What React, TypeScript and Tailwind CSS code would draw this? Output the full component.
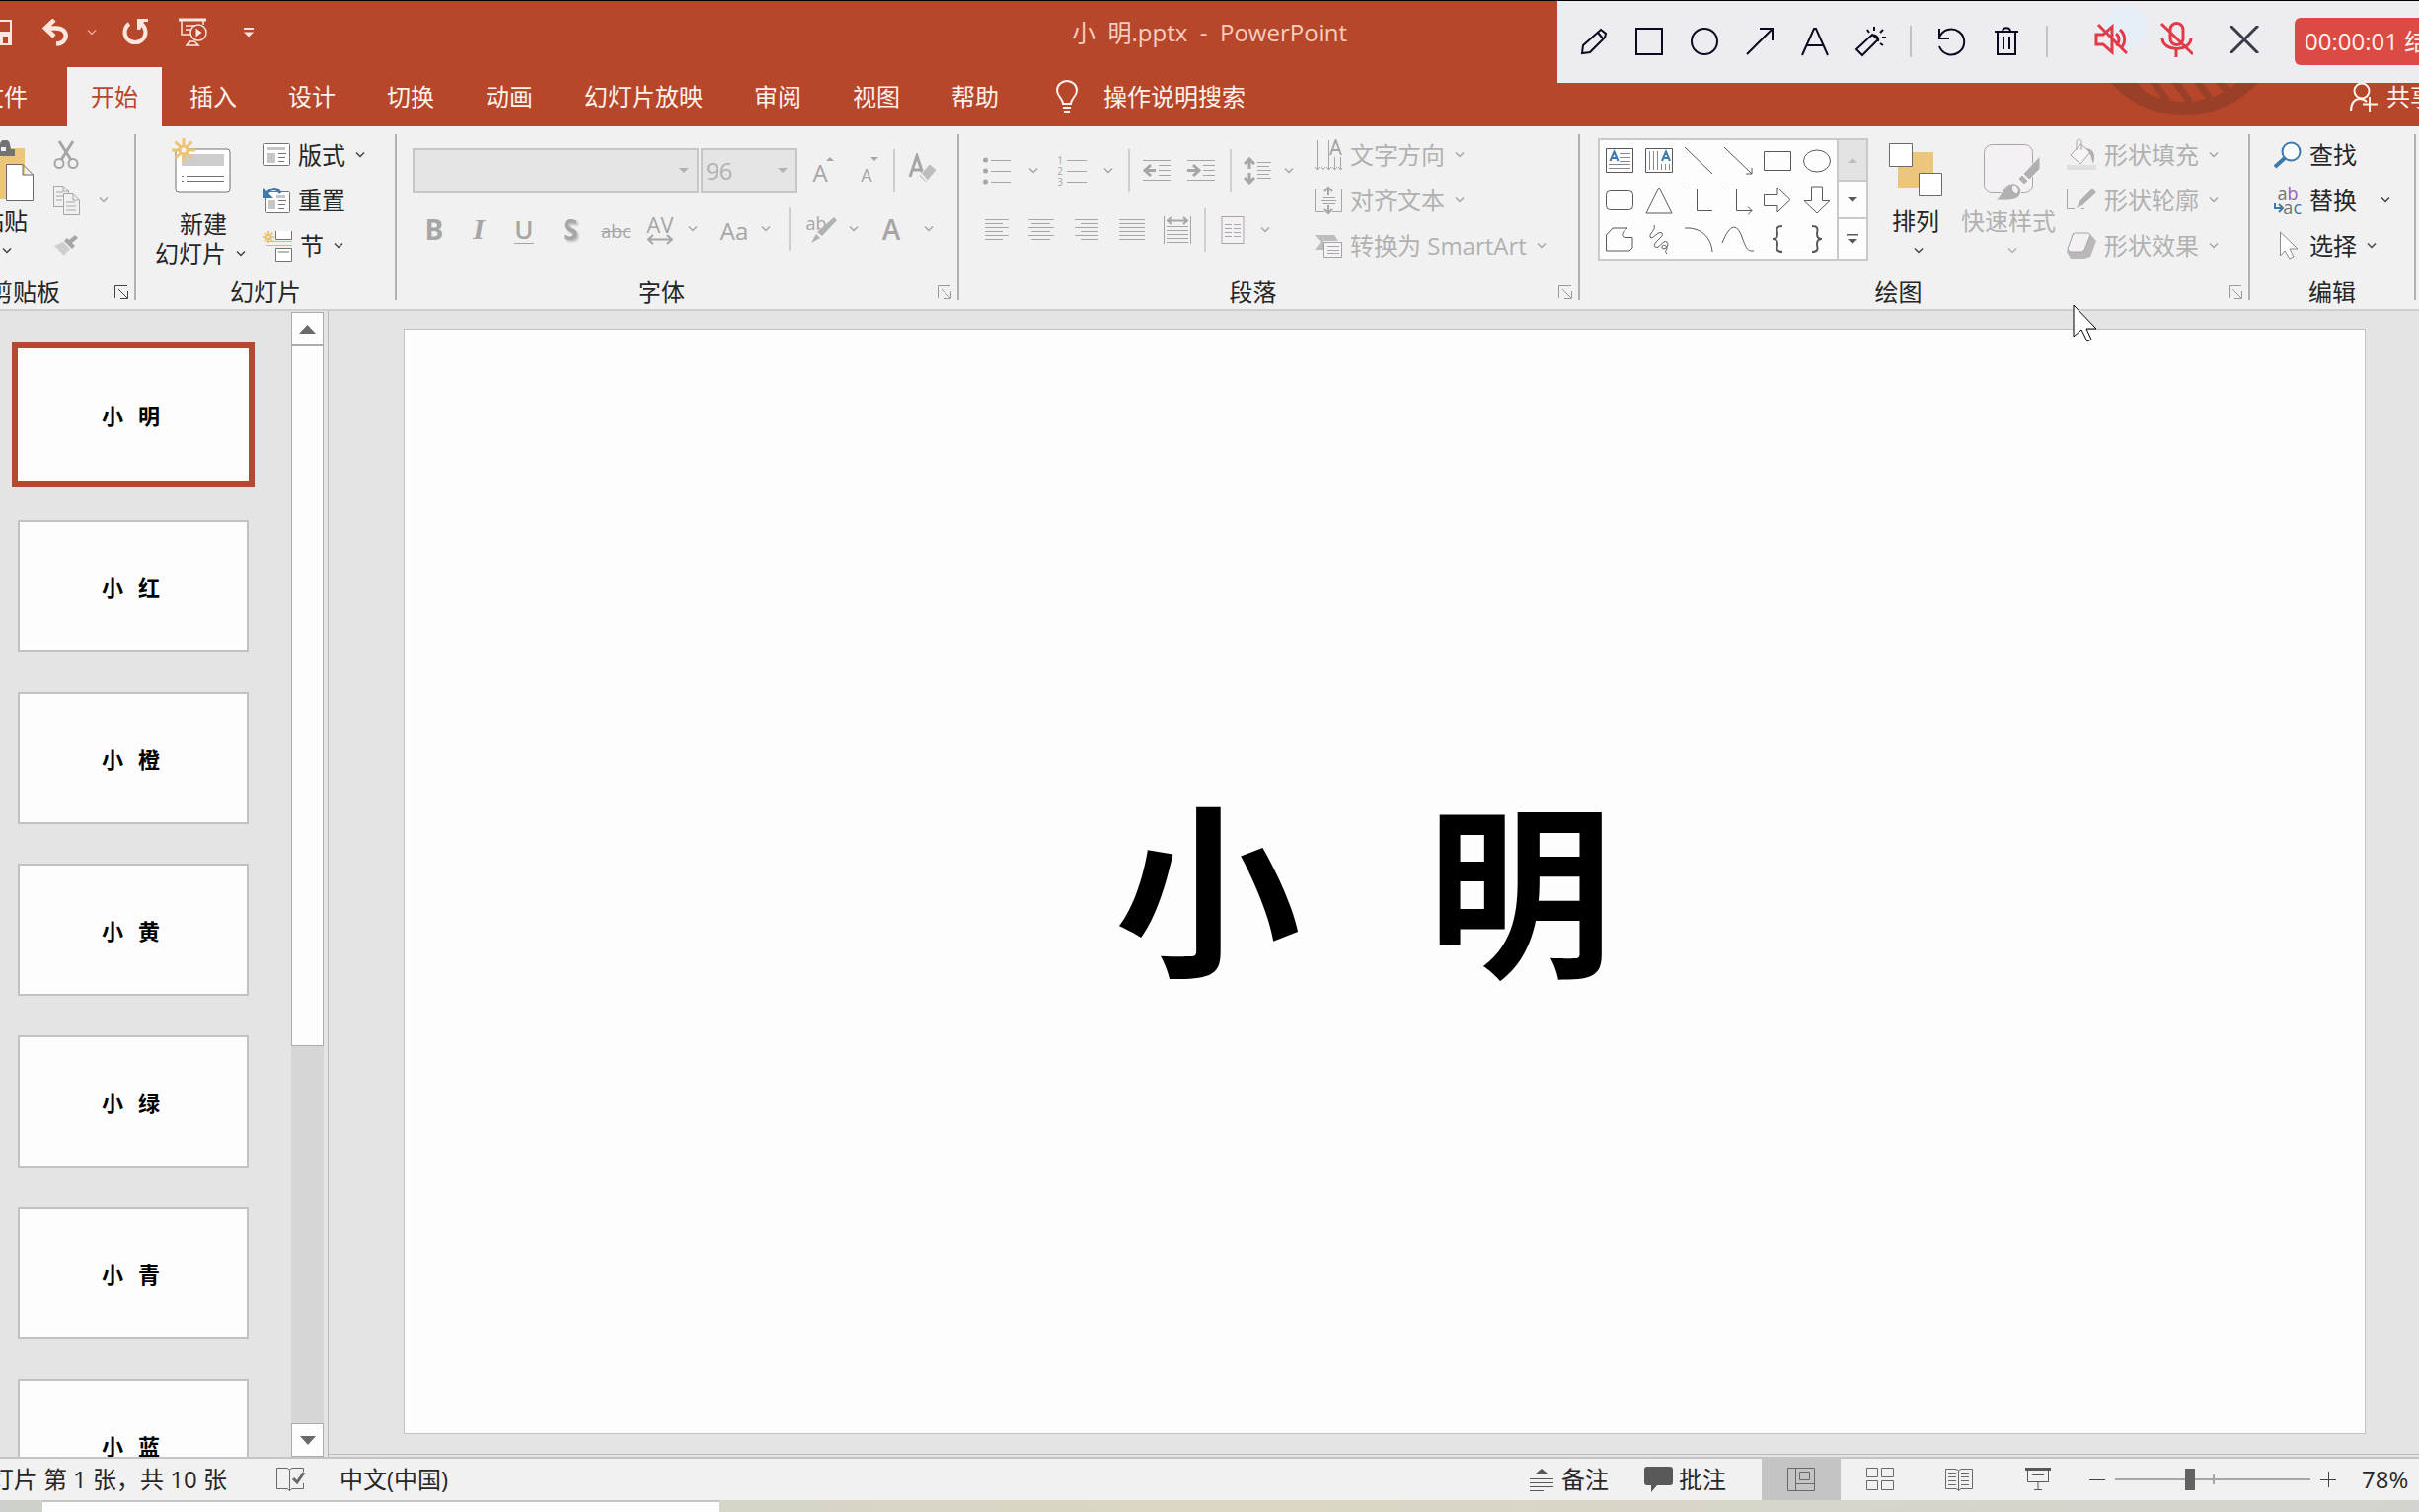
import type { ReactNode } from "react";

const slides = ["小   明 ", "小   红 ", "小   橙 ", "小   黄 ", "小   绿 ", "小   青 ", "小   蓝 "];
const tabs = ["开始", "插入", "设计", "切换", "动画", "幻灯片放映", "审阅", "视图", "帮助"];

const GRAY = "#a6a6a6";
const DARK = "#595959";

interface IconProps {
    w: number;
    h: number;
    color?: string;
    stroke?: number;
    children: ReactNode;
}

const Icon = ({ w, h, color = GRAY, stroke = 2, children }: IconProps) => (
    <svg width={w} height={h} viewBox={`0 0 ${w} ${h}`} fill="none" stroke={color} strokeWidth={stroke} className="shrink-0" aria-hidden="true">
        {children}
    </svg>
);

const Chevron = ({ color = "#444444" }: { color?: string }) => (
    <Icon w={14} h={8} color={color} stroke={1.5}>
        <path d="M3 1.5l4 4 4-4" />
    </Icon>
);

const Lines = ({ rows }: { rows: number[][] }) => (
    <path d={rows.map(([x1, x2, y]) => `M${x1} ${y}H${x2}`).join("")} />
);

const Divider = () => <div className="mt-2 h-[168px] w-0.5 shrink-0 bg-[#b1b1b1]" />;

const SmallDivider = () => <div className="h-11 w-0.5 bg-[#cfcfcf]" />;

interface GroupProps {
    label: string;
    className: string;
    launcher?: string;
    children: ReactNode;
}

const Group = ({ label, className, launcher, children }: GroupProps) => (
    <section aria-label={label} className={`flex shrink-0 flex-col ${className}`}>
        <div className="flex h-36 items-start pt-1.5">{children}</div>
        <div className="flex h-[41px] items-center pt-1.5">
            <span className="flex-1 text-center text-[#262626]">{label}</span>
            {launcher && (
                <button type="button" aria-label={`${label}设置`} className="flex w-8 pl-3">
                    <Icon w={14} h={14} color={launcher} stroke={1}>
                        <path d="M.5 13V.5H13M4 4l9 9M13.5 6v7.5H6" />
                    </Icon>
                </button>
            )}
        </div>
    </section>
);

interface MenuRowProps {
    icon: ReactNode;
    label: string;
    muted?: boolean;
    chevron?: string;
}

const MenuRow = ({ icon, label, muted, chevron }: MenuRowProps) => (
    <button type="button" className={`flex h-[46px] items-center gap-2 whitespace-nowrap ${muted ? "text-[#b1b1b1]" : "text-[#262626]"}`}>
        {icon}
        {label}
        {chevron !== undefined && (
            <span className={chevron}>
                <Chevron color={muted ? GRAY : "#444444"} />
            </span>
        )}
    </button>
);

const Tool = ({ label, className, children }: { label: string; className: string; children: ReactNode }) => (
    <button type="button" aria-label={label} className={`flex h-[46px] shrink-0 items-center justify-center text-[#a6a6a6] ${className}`}>
        {children}
    </button>
);

const Sparkle = ({ cx, cy, r }: { cx: number; cy: number; r: number }) => (
    <g stroke="#ecc474" strokeWidth={r > 8 ? 3 : 2}>
        {[0, 45, 90, 135].map((a) => (
            <path key={a} d={`M${cx - r} ${cy}H${cx + r}`} transform={`rotate(${a} ${cx} ${cy})`} />
        ))}
        <circle cx={cx} cy={cy} r={r / 3} fill="#f1f1f1" />
    </g>
);

const QuickAccess = () => (
    <div className="flex flex-1 items-center">
        <button type="button" aria-label="保存" className="w-7">
            <Icon w={13} h={26} color="#fde6de">
                <path d="M0 1H11V25H0" />
                <path d="M0 12H12V26H8V17H3V26H0z" fill="#fde6de" stroke="none" />
            </Icon>
        </button>
        <button type="button" aria-label="撤消" className="flex w-14 justify-center">
            <Icon w={28} h={28} color="#fde6de" stroke={4.5}>
                <path d="M13 1L4 9.500l9 8.500M4 9.500H15C28 9.500 28 25 15 25.500" />
            </Icon>
        </button>
        <button type="button" aria-label="撤消选项" className="ml-0.5 w-4">
            <Chevron color="#e9a893" />
        </button>
        <button type="button" aria-label="重复" className="flex w-[70px] justify-center">
            <Icon w={28} h={28} color="#fde6de" stroke={4}>
                <path d="M8 5a10.500 10.500 0 1 0 12 0" />
                <path d="M16 0H27V3H23L19 11H16z" fill="#fde6de" stroke="none" />
            </Icon>
        </button>
        <button type="button" aria-label="从头开始" className="flex w-[46px] justify-center">
            <Icon w={29} h={30} color="#fde6de" stroke={2}>
                <path d="M0 2H28" strokeWidth={3} />
                <path d="M3 3V17H12M7 8H17M7 12H12M11 23v3M8 28l3-4h5l4 4zM25 3v4" strokeWidth={1.5} />
                <circle cx="20" cy="15" r="8" strokeWidth={1.5} />
                <path d="M17.500 10.500v9l6-4.500z" fill="#fde6de" stroke="none" />
            </Icon>
        </button>
        <button type="button" aria-label="自定义快速访问工具栏" className="flex w-[68px] justify-center">
            <Icon w={10} h={10} color="#fde6de">
                <path d="M0 1H10" />
                <path d="M0 4.500H10L5 9.500z" fill="#fde6de" stroke="none" />
            </Icon>
        </button>
    </div>
);

const TabBar = () => (
    <nav className="flex h-[60px] items-stretch gap-1 overflow-hidden whitespace-nowrap text-[#fff1ec]">
        <button type="button" className="-ml-5 w-[84px] shrink-0 text-left">文件</button>
        {tabs.map((tab) => (
            <button key={tab} type="button" className={`shrink-0 px-6 ${tab === "开始" ? "bg-[#f1f1f1] text-[#b7472a]" : ""}`}>
                {tab}
            </button>
        ))}
        <button type="button" className="ml-6 flex items-center gap-6 pl-1">
            <Icon w={26} h={34} color="#fff1ec">
                <path d="M9 24C9 18 3 17 3 10.500A10 9.500 0 0 1 23 10.500C23 17 17 18 17 24zM9 28h8M10 32h6" />
            </Icon>
            操作说明搜索
        </button>
        <button type="button" className="ml-auto flex w-[70px] items-center gap-2 overflow-hidden">
            <Icon w={29} h={31} color="#fff1ec">
                <circle cx="12" cy="9" r="7.500" />
                <path d="M1 29c0-8 4-12 9-12 3 0 5 1 7 3M20 15v15M13 22.500h15" />
            </Icon>
            共享
        </button>
    </nav>
);

const Recorder = () => (
    <div role="toolbar" aria-label="录制" className="absolute top-px right-0 flex h-[83px] w-[873px] items-start overflow-hidden bg-[#edecf1] pt-[13px] pl-[9px]">
        <div className="absolute top-1 left-[554px] size-[44px] rounded-full bg-[#e6eff8]" />
        {[
            { label: "画笔", d: "M2 26l1-8L21 2l5 4-1 4L10 25zM18 5l5 6" },
            { label: "矩形", d: "M1 1H27V27H1z" },
            { label: "椭圆", d: "M14 1a13 13 0 1 1 0 26a13 13 0 1 1 0-26z" },
            { label: "箭头", d: "M1 27L27 1M14 1H27V13" },
            { label: "文字", d: "M1 28L13 1h2L27 28M5 18H23" },
            { label: "荧光笔", d: "M6 28L0 22 16 7l6 5zM14 9c3-3 9-1 8 5M18-1v4M11 2l2 3M27 2l-3 3M26 10h4M24 16l3 2" },
        ].map((tool) => (
            <button key={tool.label} type="button" aria-label={tool.label} className="relative flex h-14 w-14 shrink-0 items-center justify-center">
                <svg width="28" height="28" viewBox="0 0 28 28" fill="none" stroke="#0b0b20" strokeWidth="2" className="overflow-visible">
                    <path d={tool.d} />
                </svg>
            </button>
        ))}
        <div className="mx-3 mt-3 h-8 w-0.5 shrink-0 bg-[#c2c2c6]" />
        <button type="button" aria-label="撤销" className="flex h-14 w-14 shrink-0 items-center justify-center">
            <Icon w={30} h={30} color="#0b0b20">
                <path d="M3 2V12H13M3 11A13 13 0 1 1 3 20" />
            </Icon>
        </button>
        <button type="button" aria-label="清空" className="flex h-14 w-14 shrink-0 items-center justify-center">
            <Icon w={26} h={30} color="#0b0b20">
                <path d="M1 5H25M4 5V28H22V5M10 10V23M16 10V23M9 5c0-5 8-5 8 0" />
            </Icon>
        </button>
        <div className="mt-3 ml-3 h-8 w-0.5 shrink-0 bg-[#c2c2c6]" />
        <button type="button" aria-label="扬声器静音" className="relative ml-8 flex h-[52px] w-16 shrink-0 items-center justify-center">
            <Icon w={34} h={34} color="#e23b47" stroke={3}>
                <path d="M2 12H9L18 4V30L9 22H2zM22 11c4 3 4 9 0 12M26 7c6 5 6 14 1 19M4 2L33 31" />
            </Icon>
        </button>
        <button type="button" aria-label="麦克风静音" className="flex h-[52px] w-[68px] shrink-0 items-center justify-center">
            <Icon w={34} h={36} color="#e23b47" stroke={3}>
                <path d="M11 8a6 6 0 0 1 13 0V17a6.500 6.500 0 0 1-13 0zM3 17c1 14 28 14 29 0M17 28v8M2 2L34 33" />
            </Icon>
        </button>
        <button type="button" aria-label="关闭" className="flex h-[52px] w-[70px] shrink-0 items-center justify-center">
            <Icon w={30} h={28} color="#3a3d48" stroke={3}>
                <path d="M1 0L29 28M29 0L1 28" />
            </Icon>
        </button>
        <button type="button" className="mt-1 ml-4 h-12 w-40 shrink-0 rounded-md bg-[#dc4a44] pl-2.5 text-left whitespace-nowrap text-[#fff0ee]">
            00:00:01 结束
        </button>
    </div>
);

const ClipboardGroup = () => (
    <Group label="剪贴板" launcher="#444444" className="-ml-[54px] w-[190px]">
        <button type="button" className="ml-4 flex w-[84px] flex-col items-center text-[#262626]">
            <span className="flex h-[78px] pt-2 pl-2">
                <Icon w={56} h={64} color="#6a6a6a" stroke={1}>
                    <path d="M3 8H45V60H3z" fill="#ecc67c" stroke="none" />
                    <path d="M12 4h8a4 4 0 0 1 10-1l1 5h4v7H12z" fill="#737373" stroke="none" transform="translate(0 1)" />
                    <path d="M21 7h5v4h-5z" fill="#f1f1f1" stroke="none" />
                    <path d="M26.500 24.500H43L53.500 35V61.500H26.500zM43 24.500V35H53.500" fill="#ffffff" />
                </Icon>
            </span>
            <span className="leading-6">粘贴</span>
            <span className="flex h-9 items-center pl-1.5">
                <Chevron />
            </span>
        </button>
        <div className="flex w-[42px] flex-col">
            <Tool label="剪切" className="w-[42px]">
                <Icon w={26} h={30}>
                    <path d="M6 1L18 20M20 1L8 20" strokeWidth={3} />
                    <circle cx="6" cy="23.500" r="4.500" />
                    <circle cx="20" cy="23.500" r="4.500" />
                </Icon>
            </Tool>
            <Tool label="复制" className="w-[42px]">
                <Icon w={28} h={32} stroke={1}>
                    <path d="M1.500 1.500H11L16.500 7V22.500H1.500zM11 1.500V7h6M4 8h7M4 12h10M4 16h6" />
                    <path d="M11.500 9.500H21L27.500 16V30.500H11.500zM21 9.500V16h6M14 18h9M14 22h10M14 26h10" fill="#f1f1f1" />
                </Icon>
            </Tool>
            <Tool label="格式刷" className="w-[42px]">
                <Icon w={26} h={24}>
                    <path d="M1 12L10 8 17 15 11 22z" fill="#cfcfcf" stroke="none" />
                    <path d="M11 7l8 8 3-3-3-3 6-5-3-3-6 5-2-2z" fill={GRAY} stroke="none" />
                </Icon>
            </Tool>
        </div>
        <Tool label="复制选项" className="mt-[46px] w-[34px]">
            <Chevron color={GRAY} />
        </Tool>
    </Group>
);

const SlidesGroup = () => (
    <Group label="幻灯片" className="w-[262px]">
        <button type="button" className="ml-3 flex w-[108px] flex-col items-center text-[#262626]">
            <span className="flex h-[78px] pt-1">
                <Icon w={60} h={60} color="#737373" stroke={1}>
                    <rect x="4" y="13" width="55" height="44" rx="3" fill="#ffffff" />
                    <path d="M10 18H53V30H10z" fill="#cdcdcd" stroke="none" />
                    <path d="M10 40.500h2M15 40.500H53M10 45.500h2M15 45.500H53" />
                    <Sparkle cx={12} cy={14} r={12} />
                </Icon>
            </span>
            <span className="pl-1 leading-[30px]">新建</span>
            <span className="flex items-center gap-2 leading-[30px]">
                幻灯片
                <Chevron />
            </span>
        </button>
        <div className="ml-2 flex flex-col">
            <MenuRow
                label="版式"
                chevron=""
                icon={
                    <Icon w={28} h={24} color="#737373" stroke={1}>
                        <rect x=".5" y=".5" width="27" height="22" rx="1" fill="#ffffff" />
                        <path d="M5 4h18v3H5zM5 10h8v10H5z" fill="#c6c6c6" stroke="none" />
                        <path d="M16 10.500h8M16 14.500h7M16 18.500h6" />
                    </Icon>
                }
            />
            <MenuRow
                label="重置"
                icon={
                    <Icon w={28} h={28} color="#737373" stroke={1}>
                        <rect x="3.500" y="5.500" width="24" height="21" rx="1" fill="#ffffff" />
                        <path d="M14 9h9v3h-9zM6 14h7v9H6z" fill="#c6c6c6" stroke="none" />
                        <path d="M16 14.500h8M16 18.500h7M16 22.500h6" />
                        <path d="M4 8C8 1 15 1 18 7" stroke="#3f78ab" strokeWidth={3} />
                        <path d="M0 1v11h11z" fill="#3f78ab" stroke="none" />
                    </Icon>
                }
            />
            <MenuRow
                label="节"
                chevron=""
                icon={
                    <Icon w={30} h={32} color="#737373" stroke={1}>
                        <path d="M13.500 1V9.500H29.500V1" fill="#ffffff" />
                        <path d="M4 11.500H30M4 15.500H30" stroke="#e5b85f" />
                        <path d="M13.500 18.500H29.500V31.500H13.500zM16 22H27" fill="#ffffff" />
                        <Sparkle cx={6} cy={7} r={6} />
                    </Icon>
                }
            />
        </div>
    </Group>
);

const FontGroup = () => (
    <Group label="字体" launcher="#9a9a9a" className="w-[568px]">
        <div className="flex flex-col gap-[13px] pt-4 pl-4">
            <div className="flex items-center">
                <div className="relative flex">
                    <select aria-label="字体" disabled className="h-[46px] w-[290px] appearance-none border-2 border-[#c6c6c6] bg-[#e5e5e5]">
                        <option></option>
                    </select>
                    <svg width="10" height="6" className="absolute top-5 right-2.5"><path d="M0 0H10L5 5z" fill="#b1b1b1" /></svg>
                </div>
                <div className="relative ml-0.5 flex">
                    <select aria-label="字号" disabled className="h-[46px] w-[98px] appearance-none border-2 border-[#c6c6c6] bg-[#e5e5e5] pl-[3px] text-[#b1b1b1] opacity-100">
                        <option>96</option>
                    </select>
                    <svg width="10" height="6" className="absolute top-5 right-2.5"><path d="M0 0H10L5 5z" fill="#b1b1b1" /></svg>
                </div>
                <Tool label="增大字号" className="w-12 pl-1">
                    <span className="pt-1 text-[24px] font-medium">A</span>
                    <svg width="8" height="4" className="mb-6 -ml-0.5"><path d="M0 4H8L4 0z" fill={GRAY} /></svg>
                </Tool>
                <Tool label="减小字号" className="w-[46px] pl-1">
                    <span className="pt-2 text-[18px] font-medium">A</span>
                    <svg width="8" height="4" className="mb-6 -ml-0.5"><path d="M0 0H8L4 4z" fill={GRAY} /></svg>
                </Tool>
                <div className="flex w-2 justify-center"><SmallDivider /></div>
                <Tool label="清除所有格式" className="w-[50px]">
                    <Icon w={30} h={36}>
                        <path d="M2 24L9 3l7 21M5 17h9" strokeWidth={3} />
                        <path d="M22 11l7 6-11 13-7-7z" fill="#bdbdbd" stroke="#f1f1f1" strokeWidth={1} />
                        <path d="M13 21l6 7" stroke="#f1f1f1" />
                    </Icon>
                </Tool>
            </div>
            <div className="flex items-center">
                <Tool label="加粗" className="w-11"><b className="text-[28px]">B</b></Tool>
                <Tool label="倾斜" className="w-[46px]"><i className="font-['Liberation_Serif',serif] text-[30px] font-bold">I</i></Tool>
                <Tool label="下划线" className="w-[46px]"><span className="border-b border-[#a6a6a6] text-[26px] leading-7 font-semibold">U</span></Tool>
                <Tool label="文字阴影" className="w-12"><b className="text-[28px] [text-shadow:2px_2px_2px_#bdbdbd]">S</b></Tool>
                <Tool label="删除线" className="w-11"><s className="pt-1 text-[18px]">abc</s></Tool>
                <Tool label="字符间距" className="w-[46px]">
                    <span className="flex flex-col items-center">
                        <span className="text-[22px] leading-5">AV</span>
                        <Icon w={28} h={11}><path d="M2 5.500H26M7 1L2 5.500 7 10M21 1l5 4.500-5 4.500" /></Icon>
                    </span>
                </Tool>
                <Tool label="字符间距选项" className="w-5"><Chevron color={GRAY} /></Tool>
                <Tool label="更改大小写" className="ml-3 w-10"><span className="pt-1 text-[24px] font-medium">Aa</span></Tool>
                <Tool label="大小写选项" className="w-6"><Chevron color={GRAY} /></Tool>
                <div className="flex w-6 justify-center"><SmallDivider /></div>
                <Tool label="突出显示" className="w-[30px]">
                    <span className="relative pb-3 text-[18px] leading-5">
                        ab
                        <svg width="28" height="28" className="absolute top-1 left-1"><path d="M25 0l3 3L13 19l-5-4zM7 17l4 4-9 5z" fill="#b1b1b1" /></svg>
                    </span>
                </Tool>
                <Tool label="突出显示选项" className="w-[46px]"><Chevron color={GRAY} /></Tool>
                <Tool label="字体颜色" className="w-[30px]"><span className="text-[28px] font-semibold">A</span></Tool>
                <Tool label="字体颜色选项" className="w-[46px]"><Chevron color={GRAY} /></Tool>
            </div>
        </div>
    </Group>
);

const ParagraphGroup = () => (
    <Group label="段落" launcher="#9a9a9a" className="w-[627px]">
        <div className="flex w-[360px] shrink-0 flex-col gap-[14px] pt-4 pl-4">
            <div className="flex items-center">
                <Tool label="项目符号" className="w-11">
                    <Icon w={28} h={28} stroke={1}>
                        <g fill={GRAY} stroke="none"><circle cx="2.500" cy="3" r="2.500" /><circle cx="2.500" cy="14" r="2.500" /><circle cx="2.500" cy="25" r="2.500" /></g>
                        <Lines rows={[[8, 28, 3.5], [8, 28, 14.5], [8, 28, 25.5]]} />
                    </Icon>
                </Tool>
                <Tool label="项目符号选项" className="w-[30px]"><Chevron color={GRAY} /></Tool>
                <Tool label="编号" className="w-12">
                    <span className="flex flex-col pr-1 text-[10px] leading-[11px]"><span>1</span><span>2</span><span>3</span></span>
                    <Icon w={20} h={28} stroke={1}><Lines rows={[[0, 20, 3.5], [0, 20, 14.5], [0, 20, 25.5]]} /></Icon>
                </Tool>
                <Tool label="编号选项" className="w-[26px]"><Chevron color={GRAY} /></Tool>
                <div className="flex w-4 justify-center"><SmallDivider /></div>
                <Tool label="降低列表级别" className="w-10">
                    <Icon w={28} h={22} stroke={1}>
                        <Lines rows={[[0, 28, .5], [16, 28, 5.5], [16, 28, 10.5], [16, 28, 15.5], [0, 28, 20.5]]} />
                        <path d="M13 10.500H3M8 5l-6 5.500L8 16" strokeWidth={3} />
                    </Icon>
                </Tool>
                <Tool label="提高列表级别" className="w-[50px]">
                    <Icon w={28} h={22} stroke={1}>
                        <Lines rows={[[0, 28, .5], [16, 28, 5.5], [16, 28, 10.5], [16, 28, 15.5], [0, 28, 20.5]]} />
                        <path d="M0 10.500H11M6 5l6 5.500L6 16" strokeWidth={3} />
                    </Icon>
                </Tool>
                <div className="flex w-2.5 justify-center"><SmallDivider /></div>
                <Tool label="行距" className="w-11">
                    <Icon w={28} h={28} stroke={1}>
                        <Lines rows={[[14, 28, 5.5], [14, 26, 9.5], [14, 28, 13.5], [14, 26, 17.5], [14, 28, 21.5]]} />
                        <path d="M6 12V2M1 7l5-5 5 5M6 16V26M1 21l5 5 5-5" strokeWidth={3} />
                    </Icon>
                </Tool>
                <Tool label="行距选项" className="w-5"><Chevron color={GRAY} /></Tool>
            </div>
            <div className="flex items-center">
                <Tool label="左对齐" className="w-11">
                    <Icon w={24} h={22} stroke={1}><Lines rows={[[0, 24, .5], [0, 18, 4.5], [0, 24, 8.5], [0, 18, 12.5], [0, 24, 16.5], [0, 18, 20.5]]} /></Icon>
                </Tool>
                <Tool label="居中" className="w-[46px]">
                    <Icon w={26} h={22} stroke={1}><Lines rows={[[0, 26, .5], [3, 22, 4.5], [0, 26, 8.5], [3, 22, 12.5], [0, 26, 16.5], [3, 22, 20.5]]} /></Icon>
                </Tool>
                <Tool label="右对齐" className="w-[46px]">
                    <Icon w={24} h={22} stroke={1}><Lines rows={[[0, 24, .5], [6, 24, 4.5], [0, 24, 8.5], [6, 24, 12.5], [0, 24, 16.5], [6, 24, 20.5]]} /></Icon>
                </Tool>
                <Tool label="两端对齐" className="w-[46px]">
                    <Icon w={26} h={22} stroke={1}><Lines rows={[[0, 26, .5], [0, 26, 4.5], [0, 26, 8.5], [0, 26, 12.5], [0, 26, 16.5], [0, 26, 20.5]]} /></Icon>
                </Tool>
                <Tool label="分散对齐" className="w-[46px]">
                    <Icon w={28} h={28} stroke={1}>
                        <path d="M.5 0V28M27.500 0V28" />
                        <Lines rows={[[3, 25, 10.5], [3, 25, 14.5], [3, 25, 18.5], [3, 25, 22.5], [3, 25, 26.5]]} />
                        <path d="M4 4.500H24M8 1L4 4.500 8 8M20 1l4 3.500L20 8" strokeWidth={2} />
                    </Icon>
                </Tool>
                <div className="flex w-2.5 justify-center"><SmallDivider /></div>
                <Tool label="分栏" className="w-[46px]">
                    <Icon w={24} h={28} stroke={1}>
                        <rect x="1" y=".5" width="22" height="27" fill="#f5f0f3" />
                        <Lines rows={[[4, 11, 8.5], [13, 20, 8.5], [4, 11, 12.5], [13, 20, 12.5], [4, 11, 16.5], [13, 20, 16.5], [4, 11, 20.5], [13, 20, 20.5]]} />
                    </Icon>
                </Tool>
                <Tool label="分栏选项" className="w-5"><Chevron color={GRAY} /></Tool>
            </div>
        </div>
        <div className="flex flex-col">
            <MenuRow
                muted
                label="文字方向"
                chevron=""
                icon={
                    <Icon w={28} h={32} stroke={1}>
                        <path d="M2.500 1V31M8.500 1V31M14.500 1V31M20.500 18V31M26.500 18V31M0 28l2.500 3 2.500-3M6 28l2.500 3 2.500-3M12 28l2.500 3 2.500-3M18 28l2.500 3 2.500-3M24 28l2.500 3 2.500-3" />
                        <path d="M16 16l5.500-15L27 16M18 11h7" strokeWidth={2} />
                    </Icon>
                }
            />
            <MenuRow
                muted
                label="对齐文本"
                chevron=""
                icon={
                    <Icon w={28} h={30} stroke={1}>
                        <path d="M10 3.500H.500V26.500H10M18 3.500H27.500V26.500H18" />
                        <Lines rows={[[8, 21, 12.5], [6, 22, 15.5], [8, 21, 18.5]]} />
                        <path d="M14 10V2M10 6l4-4 4 4M14 20V28M10 24l4 4 4-4" strokeWidth={2} />
                    </Icon>
                }
            />
            <MenuRow
                muted
                label="转换为 SmartArt"
                chevron=""
                icon={
                    <Icon w={28} h={26} stroke={1}>
                        <path d="M0 2H20L24 8H9V17H0L6 9z" fill="#bdbdbd" stroke="none" />
                        <rect x="9.500" y="9.500" width="18" height="15" fill="#f7f2f5" />
                        <Lines rows={[[13, 25, 13.5], [13, 25, 17.5], [13, 25, 20.5]]} />
                    </Icon>
                }
            />
        </div>
    </Group>
);

const shapes: { name: string; node: ReactNode }[] = [
    { name: "文本框", node: <><path d="M.5 2.500H27.500V26.500H.500zM14 7.500H25M14 11.500H25M14 15.500H25M3 18.500H25M3 22.500H25" stroke="#8a8a8a" /><path d="M.5 2.500H27.500V26.500H.500z" /><path d="M4.500 15L8.500 5.500 12.500 15M6 12h5" stroke="#3f78ab" strokeWidth={2} /></> },
    { name: "竖排文本框", node: <><path d="M4.500 5V24M8.500 5V24M12.500 5V24M16.500 18v6M20.500 18v6M24.500 18v6" stroke="#8a8a8a" /><path d="M.5 2.500H27.500V26.500H.500z" /><path d="M17 15l4-9.500L25 15M18.500 12h5" stroke="#3f78ab" strokeWidth={2} /></> },
    { name: "直线", node: <path d="M0 1L28 28" /> },
    { name: "箭头", node: <path d="M0 1L28 28M28 22V28H22" /> },
    { name: "矩形", node: <path d="M.5 5.500H27.500V24.500H.500z" /> },
    { name: "椭圆", node: <ellipse cx="14" cy="15" rx="13.500" ry="11" /> },
    { name: "圆角矩形", node: <rect x=".5" y="5.500" width="27" height="19" rx="4" /> },
    { name: "三角形", node: <path d="M14 2L27 28H1z" /> },
    { name: "肘形连接符", node: <path d="M0 3.500H12.500V25.500H28" /> },
    { name: "肘形箭头", node: <path d="M0 3.500H12.500V25.500H28M24 21.500l4 4-4 4" /> },
    { name: "右箭头", node: <path d="M.5 9.500H14V2L27 14.500 14 27V20.500H.500z" /> },
    { name: "下箭头", node: <path d="M8.500 1H19.500V15.500H27L14 28 1 15.500H8.500z" /> },
    { name: "任意多边形", node: <path d="M7 3H22C16 7 15 12 20 12.500H27V23l-3 3H.500V10z" /> },
    { name: "自由曲线", node: <path d="M9 0C11 5 4 8 5 12C7 16 13 5 17 8C20 12 6 18 10 22C14 25 18 14 22 17C25 21 19 26 17 23C16 20 21 19 22 23C22 26 19 26 22 29" /> },
    { name: "弧形", node: <path d="M0 3C16 2 27 12 28 27" /> },
    { name: "曲线", node: <path d="M-2 18C6-2 13-2 18 12S24 26 30 26" /> },
    { name: "左大括号", node: <path d="M19 1C11 1 14 6 14 9S13 14 9 14C13 14 14 16 14 19S11 27 19 27" strokeWidth={2} /> },
    { name: "右大括号", node: <path d="M9 1C17 1 14 6 14 9S15 14 19 14C15 14 14 16 14 19S17 27 9 27" strokeWidth={2} /> },
];

const DrawingGroup = () => (
    <Group label="绘图" launcher="#9a9a9a" className="w-[677px]">
        <div className="mt-1.5 ml-[18px] flex h-[124px] w-[274px] shrink-0 border-2 border-[#c9c9c9] bg-[#fdfdfd]">
            <div className="grid w-60 grid-cols-6 grid-rows-3">
                {shapes.map((shape) => (
                    <button key={shape.name} type="button" aria-label={shape.name} className="flex size-10 items-center justify-center">
                        <svg width="28" height="29" viewBox="0 0 28 29" fill="none" stroke={DARK} strokeWidth="1" className="overflow-visible">
                            {shape.node}
                        </svg>
                    </button>
                ))}
            </div>
            <div className="flex flex-1 flex-col divide-y-2 divide-[#c9c9c9] border-l-2 border-[#c9c9c9]">
                <button type="button" aria-label="上一行" className="flex flex-1 items-center justify-center bg-[#e3e3e3]">
                    <svg width="10" height="5"><path d="M0 5H10L5 0z" fill="#bdbdbd" /></svg>
                </button>
                <button type="button" aria-label="下一行" className="flex h-[38px] items-center justify-center">
                    <svg width="10" height="5"><path d="M0 0H10L5 5z" fill={DARK} /></svg>
                </button>
                <button type="button" aria-label="其他形状" className="flex flex-1 items-center justify-center">
                    <svg width="12" height="10"><path d="M0 0H12V1.500H0zM1 5H11L6 10z" fill={DARK} /></svg>
                </button>
            </div>
        </div>
        <button type="button" className="ml-2.5 flex w-[76px] flex-col items-center text-[#262626]">
            <span className="flex h-[78px] pt-[11px]">
                <Icon w={54} h={54} color="#6a6a6a" stroke={1}>
                    <path d="M9 9H45V45H9z" fill="#ecc67c" stroke="none" />
                    <path d="M.5.500H23.500V23.500H.500zM30.500 30.500H53.500V53.500H30.500z" fill="#ffffff" />
                </Icon>
            </span>
            <span className="leading-6">排列</span>
            <span className="flex h-9 items-center pl-1.5"><Chevron /></span>
        </button>
        <button type="button" className="ml-1 flex w-[104px] flex-col items-center text-[#b1b1b1]">
            <span className="flex h-[78px] pt-3 pl-2">
                <Icon w={58} h={58} stroke={1}>
                    <rect x=".5" y=".5" width="49" height="49" rx="8" fill="#f4f0f4" />
                    <path d="M57 12V25L46 36 40 30z" fill="#b1b1b1" stroke="#f1f1f1" />
                    <path d="M39 31l6 6-4 4-6-6z" fill="#b1b1b1" stroke="#f1f1f1" />
                    <path d="M12 57C18 54 18 42 28 40 36 39 41 47 35 54 30 58 20 57 12 57z" fill="#b1b1b1" stroke="#f1f1f1" />
                    <path d="M29 41c6 0 8 5 5 10-5-1-7-5-5-10z" fill="#f1f1f1" />
                </Icon>
            </span>
            <span className="leading-6">快速样式</span>
            <span className="flex h-9 items-center pl-2"><Chevron color="#b1b1b1" /></span>
        </button>
        <div className="ml-[7px] flex flex-col">
            <MenuRow
                muted
                label="形状填充"
                chevron=""
                icon={
                    <Icon w={30} h={34} stroke={1}>
                        <path d="M0 27H30V32H0z" fill="#dfdfdf" stroke="none" />
                        <path d="M14 6L4 17 14 26 24 14zM10 12V4c0-4 5-4 5 0v8" fill="#f7f3f6" />
                        <path d="M20 10c7 1 10 6 7 16-2-6-2-8-4-11z" fill="#b1b1b1" stroke="none" />
                    </Icon>
                }
            />
            <MenuRow
                muted
                label="形状轮廓"
                chevron=""
                icon={
                    <Icon w={30} h={28} stroke={1}>
                        <path d="M24 2.500H.500V22.500H8M15 22.500H18" />
                        <path d="M26 2l4 4L16 19l-6 3 3-7z" fill="#b1b1b1" stroke="none" />
                    </Icon>
                }
            />
            <MenuRow
                muted
                label="形状效果"
                chevron=""
                icon={
                    <Icon w={30} h={28} stroke={1}>
                        <path d="M6 1H23L30 9 24 25 18 27H4L0 20z" fill="#b9b9b9" stroke="none" />
                        <path d="M8 1H22l2 2-6 15-2 2H3L1 17 6 3z" fill="#f4f0f4" />
                    </Icon>
                }
            />
        </div>
    </Group>
);

const EditGroup = () => (
    <Group label="编辑" className="w-[166px]">
        <div className="flex flex-col pl-6">
            <MenuRow
                label="查找"
                icon={
                    <Icon w={28} h={28} color="#3f78ab">
                        <circle cx="17.500" cy="10.500" r="9" fill="#fafdff" />
                        <path d="M11 17L1 26" strokeWidth={4} />
                    </Icon>
                }
            />
            <MenuRow
                label="替换"
                chevron="ml-3.5"
                icon={
                    <span className="relative flex h-7 w-7 flex-col text-[18px] leading-[14px]">
                        <span className="text-[#737373]">a<span className="text-[#9a5fb5]">b</span></span>
                        <span className="text-right text-[#737373]">a<span className="text-[#3f78ab]">c</span></span>
                        <svg width="11" height="12" className="absolute bottom-0 left-0" fill="none" stroke="#3f78ab" strokeWidth="2"><path d="M1 1v5h8M5 2l4 4-4 4" /></svg>
                    </span>
                }
            />
            <MenuRow
                label="选择"
                chevron=""
                icon={
                    <Icon w={28} h={30} color="#8a8a8a" stroke={1}>
                        <path d="M6.500 1V25L11 20l5 8 4-2-4-8H24z" fill="#ffffff" />
                    </Icon>
                }
            />
        </div>
    </Group>
);

const SlidePanel = () => (
    <aside aria-label="幻灯片缩略图" className="flex w-[333px] shrink-0 border-r border-[#b9b9b9]">
        <div className="flex flex-1 flex-col gap-10 overflow-hidden pt-[38px] pl-[18px]">
            {slides.map((name, i) => (
                <button
                    key={name}
                    type="button"
                    className={`h-[134px] w-[234px] shrink-0 bg-[#fdfdfd] font-['Noto_Sans_CJK_SC',sans-serif] text-[22px] font-bold whitespace-pre text-black ${i === 0 ? "ring-6 ring-[#b04a30]" : "border-2 border-[#c2c2c2]"}`}
                >
                    {name}
                </button>
            ))}
        </div>
        <div className="mr-1 flex w-[33px] flex-col pt-px">
            <button type="button" aria-label="向上滚动" className="flex h-[34px] items-center justify-center border border-[#ababab] bg-[#fdfdfd]">
                <svg width="17" height="9"><path d="M0 9H17L8.500 0z" fill="#6a6a6a" /></svg>
            </button>
            <div className="flex min-h-0 flex-1 flex-col bg-[#d6d6d6]">
                <div className="h-[65%] border border-[#ababab] bg-[#fdfdfd]" />
            </div>
            <button type="button" aria-label="向下滚动" className="flex h-[34px] items-center justify-center border border-[#ababab] bg-[#fdfdfd]">
                <svg width="16" height="9"><path d="M0 0H16L8 9z" fill="#6a6a6a" /></svg>
            </button>
        </div>
    </aside>
);

const ViewButton = ({ label, active, children }: { label: string; active?: boolean; children: ReactNode }) => (
    <button type="button" aria-label={label} className={`flex h-full w-20 items-center justify-center ${active ? "bg-[#c4c4c4]" : ""}`}>
        {children}
    </button>
);

const StatusBar = () => (
    <footer className="flex h-11 shrink-0 items-center border-t-2 border-[#c4c4c4] bg-[#f1f1f1] text-[#262626]">
        <div className="flex w-[230px] justify-end overflow-hidden whitespace-nowrap">
            <span>幻灯片 第 1 张，共 10 张</span>
        </div>
        <button type="button" aria-label="拼写检查" className="ml-[50px]">
            <Icon w={30} h={26} color="#6a6a6a" stroke={1}>
                <path d="M13.500 25V3L11 1.500H.500V22.500H11L13.500 24.500 16 22.500H27.500V17M13.500 3L16 1.500H27.500V5" />
                <path d="M17 12l4 4 7-10" strokeWidth={3} />
            </Icon>
        </button>
        <button type="button" className="ml-[34px]">中文(中国)</button>
        <div className="ml-auto flex h-full items-center">
            <button type="button" className="flex items-center gap-2">
                <Icon w={24} h={24} color={DARK} stroke={1}>
                    <path d="M6 6H18L12 1z" fill={DARK} stroke="none" />
                    <Lines rows={[[0, 24, 11.5], [0, 24, 15.5], [0, 24, 19.5], [0, 14, 23.5]]} />
                </Icon>
                备注
            </button>
            <button type="button" className="ml-9 flex items-center gap-1.5">
                <Icon w={29} h={26}>
                    <path d="M3 0H26a3 3 0 0 1 3 3V16a3 3 0 0 1-3 3H13L7 26V19H3a3 3 0 0 1-3-3V3a3 3 0 0 1 3-3z" fill={DARK} stroke="none" />
                </Icon>
                批注
            </button>
            <div className="ml-9 flex h-full">
                <ViewButton label="普通视图" active>
                    <Icon w={28} h={24} color="#6a6a6a" stroke={1}>
                        <path d="M.5.500H27.500V23.500H.500zM8.500.500V23.500M8.500 16.500H27.500M12.500 4.500H22.500V12.500H12.500z" />
                    </Icon>
                </ViewButton>
                <ViewButton label="幻灯片浏览">
                    <Icon w={28} h={24} color="#6a6a6a" stroke={1}>
                        <path d="M.5.500H11.500V9.500H.500zM15.500.500H27.500V9.500H15.500zM.500 13.500H11.500V22.500H.500zM15.500 13.500H27.500V22.500H15.500z" />
                    </Icon>
                </ViewButton>
                <ViewButton label="阅读视图">
                    <Icon w={28} h={24} color="#6a6a6a" stroke={1}>
                        <path d="M.5 1.500H11L13.500 3 16 1.500H27.500V21.500H16L13.500 23 11 21.500H.500zM13.500 3V24" />
                        <Lines rows={[[3, 11, 5.5], [16, 24, 5.5], [3, 11, 9.5], [16, 24, 9.5], [3, 11, 13.5], [16, 24, 13.5], [3, 11, 17.5], [16, 24, 17.5]]} />
                    </Icon>
                </ViewButton>
                <ViewButton label="幻灯片放映">
                    <Icon w={26} h={24} color={DARK} stroke={1}>
                        <path d="M0 0H26V3H0z" fill={DARK} stroke="none" />
                        <path d="M2.500 3V14.500H23.500V3M7 7.500H19M13 15V22M9 22.500H17" />
                    </Icon>
                </ViewButton>
            </div>
            <button type="button" aria-label="缩小" className="ml-3">
                <Icon w={16} h={16} color="#444444" stroke={1}><path d="M0 8.500H16" /></Icon>
            </button>
            <div className="relative mx-2.5 flex w-[198px] items-center">
                <input
                    type="range"
                    aria-label="缩放"
                    min={0}
                    max={100}
                    defaultValue={38}
                    className="h-[22px] w-full appearance-none bg-transparent [&::-webkit-slider-runnable-track]:h-0.5 [&::-webkit-slider-runnable-track]:bg-[#a6a6a6] [&::-webkit-slider-thumb]:-mt-2.5 [&::-webkit-slider-thumb]:h-[22px] [&::-webkit-slider-thumb]:w-2.5 [&::-webkit-slider-thumb]:appearance-none [&::-webkit-slider-thumb]:bg-[#626262]"
                />
                <div className="absolute left-1/2 h-2.5 w-0.5 bg-[#a6a6a6]" />
            </div>
            <button type="button" aria-label="放大">
                <Icon w={16} h={16} color="#444444" stroke={1}><path d="M0 8.500H16M8.500 0V16" /></Icon>
            </button>
            <button type="button" className="ml-[26px] w-[58px] text-left">78%</button>
        </div>
    </footer>
);

const App = () => {
    return (
        <div className="relative flex h-screen w-full flex-col overflow-hidden bg-[#e4e4e4] font-['Open_Sans','Noto_Sans_CJK_SC',sans-serif] text-[24px] leading-6">
            <header className="relative shrink-0 overflow-hidden border-t border-black bg-[#b7472a]">
                <svg width="164" height="116" viewBox="0 0 164 116" className="absolute top-0 right-[156px]" aria-hidden="true">
                    <circle cx="82" cy="16" r="93" fill="none" stroke="#9a3f28" strokeWidth="14" />
                    <g stroke="#9a3f28" strokeWidth="7">
                        <path d="M20 70l24 30M42 70l24 32M64 70l24 32M86 70l22 28M108 70l18 22" />
                    </g>
                </svg>
                <div className="flex h-[67px] items-center pb-1">
                    <QuickAccess />
                    <h1 className="font-normal whitespace-pre text-[#f6cdbf]">小  明.pptx  -  PowerPoint</h1>
                    <div className="flex-1" />
                </div>
                <TabBar />
            </header>

            <div className="flex h-[187px] shrink-0 overflow-hidden border-b-2 border-[#cfcfcf] bg-[#f1f1f1]">
                <ClipboardGroup />
                <Divider />
                <SlidesGroup />
                <Divider />
                <FontGroup />
                <Divider />
                <ParagraphGroup />
                <Divider />
                <DrawingGroup />
                <Divider />
                <EditGroup />
                <Divider />
            </div>

            <main className="flex min-h-0 flex-1">
                <SlidePanel />
                <div className="mb-0.5 flex flex-1 border-b border-[#b9b9b9] pt-[18px] pr-[54px] pb-5 pl-[76px]">
                    <div className="flex flex-1 items-center justify-center border border-[#c2c2c2] bg-[#fdfdfd]">
                        <p className="font-['Noto_Sans_CJK_SC',sans-serif] text-[188px] leading-none font-bold whitespace-pre text-black">{slides[0]}</p>
                    </div>
                </div>
            </main>

            <StatusBar />
            <div className="flex h-3 shrink-0 bg-linear-to-r from-[#cdd1cb] via-[#dcd7c5] to-[#d3d4cf]">
                <div className="ml-[43px] w-[686px] border-t-2 border-[#c4c4c4] bg-[#fdfdfd]" />
            </div>

            <Recorder />

            <svg width="26" height="40" viewBox="0 0 26 40" className="absolute top-[308px] right-[325px]" aria-hidden="true">
                <path d="M1 1V33L9 26l6 12 4-2-5-11H24z" fill="#ffffff" stroke="#000000" strokeWidth="1" />
            </svg>
        </div>
    );
};

export default App;
